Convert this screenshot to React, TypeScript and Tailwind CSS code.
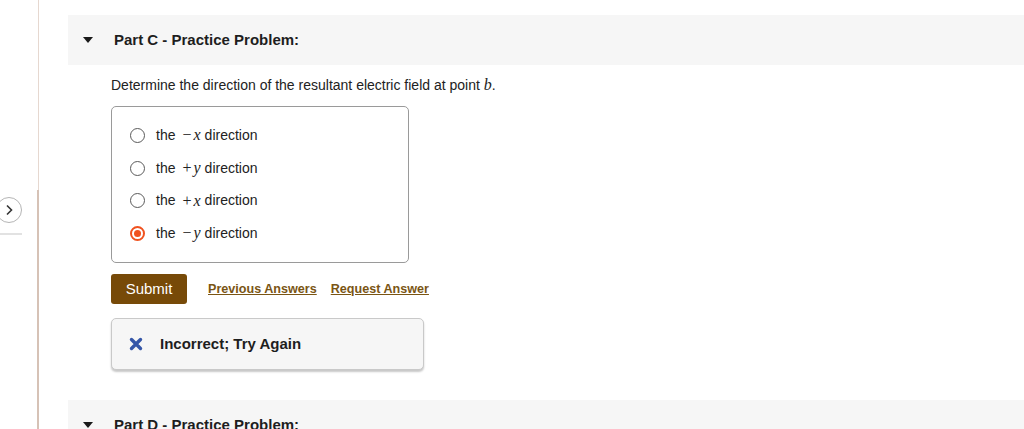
import React from "react";

function Radio({ checked }: { checked?: boolean }) {
  if (checked) {
    return (
      <span className="flex h-[15px] w-[15px] items-center justify-center rounded-full border-[2px] border-[#f0521f] bg-white">
        <span className="h-[7px] w-[7px] rounded-full bg-[#f0521f]" />
      </span>
    );
  }
  return <span className="h-[15px] w-[15px] rounded-full border-[1.5px] border-[#5a5a5a] bg-white" />;
}

function Option({ sign, v, checked }: { sign: string; v: string; checked?: boolean }) {
  return (
    <div className="flex h-[32.7px] items-center">
      <Radio checked={checked} />
      <span className="ml-[11px] flex items-center text-[14px] text-[#222]">
        <span>the</span>
        <span className="ml-[7px] mr-[4px] flex items-center font-['Liberation_Serif',serif] text-[16px]">
          <span className="mr-[2px]">{sign}</span>
          <i>{v}</i>
        </span>
        <span>direction</span>
      </span>
    </div>
  );
}

function Header({ title }: { title: string }) {
  return (
    <div className="flex h-[50px] items-center bg-[#f6f6f6] pl-[15px]">
      <svg width="10" height="6" viewBox="0 0 10 6" className="shrink-0">
        <path d="M0 0 H10 L5 6 Z" fill="#1a1a1a" />
      </svg>
      <span className="ml-[21px] text-[15px] font-bold text-[#1e1e1e]">{title}</span>
    </div>
  );
}

export default function App() {
  return (
    <div className="flex h-[429px] w-[1024px] overflow-hidden bg-white font-['Liberation_Sans',Arial,sans-serif]">
      <div className="w-[37px] shrink-0 pt-[197px]">
        <div className="-ml-[4px] flex h-[26px] w-[26px] items-center justify-center rounded-full border border-[#b5b5b5] bg-white">
          <svg width="10" height="12" viewBox="0 0 10 12">
            <path d="M3 1.5 L7.5 6 L3 10.5" fill="none" stroke="#333" strokeWidth="1.6" />
          </svg>
        </div>
        <div className="mt-[10px] h-[2px] w-[22px] bg-[#e2e2e2]" />
      </div>
      <div className="flex w-[2px] shrink-0 flex-col">
        <div className="ml-[1px] h-[190px] w-[1px] bg-[#e6d8d0]" />
        <div className="w-[2px] flex-1 bg-[#d6c2b6]" />
      </div>
      <div className="flex-1 pl-[29px] pt-[15px]">
        <Header title="Part C - Practice Problem:" />
        <div className="pl-[43px]">
          <p className="mt-[11px] text-[14px] leading-[18px] text-[#222]">
            Determine the direction of the resultant electric field at point{" "}
            <i className="font-['Liberation_Serif',serif] text-[16px]">b</i>.
          </p>
          <div className="mt-[12px] h-[157px] w-[298px] rounded-[5px] border border-[#9a9a9a] pl-[18px] pt-[12px]">
            <Option sign="−" v="x" />
            <Option sign="+" v="y" />
            <Option sign="+" v="x" />
            <Option sign="−" v="y" checked />
          </div>
          <div className="mt-[11px] flex items-center">
            <button className="h-[30px] w-[76px] rounded-[3px] bg-[#774a08] text-[15px] text-white">
              Submit
            </button>
            <a className="ml-[21px] text-[12.6px] font-bold text-[#7a5514] underline">Previous Answers</a>
            <a className="ml-[14px] text-[12.6px] font-bold text-[#7a5514] underline">Request Answer</a>
          </div>
          <div className="mt-[14px] flex h-[52px] w-[313px] items-center rounded-[5px] border border-[#c9c9c9] bg-[#f6f6f6] pl-[17px] shadow-[0_2px_2px_rgba(0,0,0,0.22)]">
            <svg width="14" height="14" viewBox="0 0 14 14">
              <path d="M2.5 2.5 L11.5 11.5 M11.5 2.5 L2.5 11.5" stroke="#3556a8" strokeWidth="3.4" strokeLinecap="round" />
            </svg>
            <span className="ml-[17px] text-[15px] font-bold text-[#1e1e1e]">Incorrect; Try Again</span>
          </div>
        </div>
        <div className="mt-[30px]">
          <Header title="Part D - Practice Problem:" />
        </div>
      </div>
    </div>
  );
}
